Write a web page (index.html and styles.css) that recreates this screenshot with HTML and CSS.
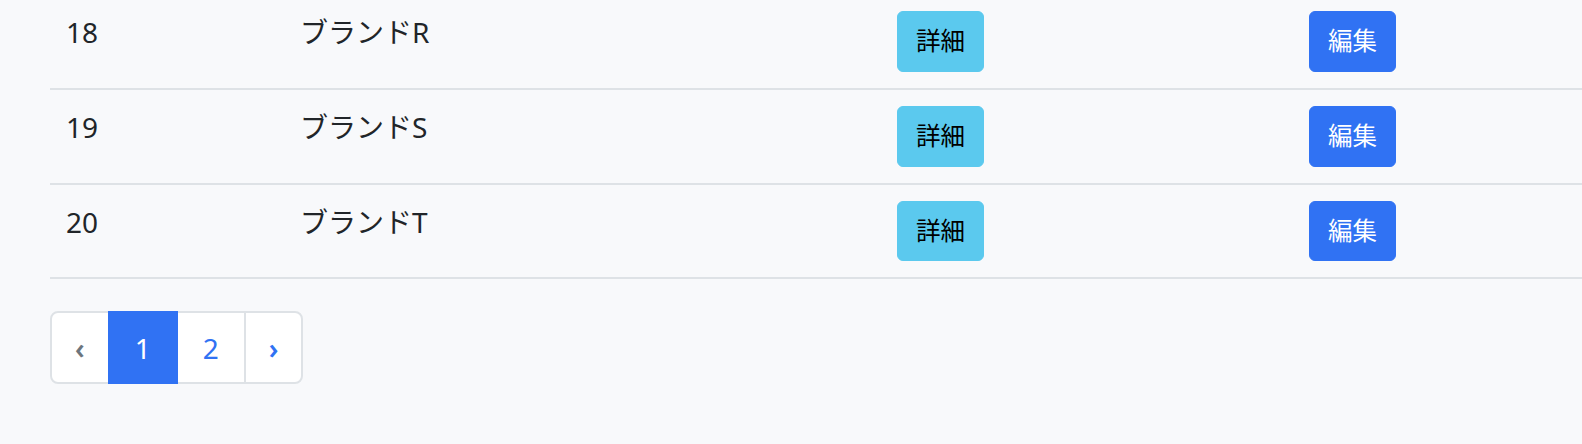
FILE: index.html
```html
<!DOCTYPE html>
<html lang="ja">
<head>
<meta charset="UTF-8" />
<meta name="viewport" content="width=device-width, initial-scale=1" />
<title>ブランド一覧</title>
<link rel="stylesheet" href="styles.css">
</head>
<body>

<div class="main-container">
  <table class="brand-table">
    <colgroup>
      <col class="col-id">
      <col class="col-name">
      <col class="col-detail">
      <col class="col-edit">
    </colgroup>
    <tbody>
      <tr>
        <td>18</td>
        <td>ブランドR</td>
        <td><a class="btn btn-info" href="#">詳細</a></td>
        <td><a class="btn btn-primary" href="#">編集</a></td>
      </tr>
      <tr>
        <td>19</td>
        <td>ブランドS</td>
        <td><a class="btn btn-info" href="#">詳細</a></td>
        <td><a class="btn btn-primary" href="#">編集</a></td>
      </tr>
      <tr>
        <td>20</td>
        <td>ブランドT</td>
        <td><a class="btn btn-info" href="#">詳細</a></td>
        <td><a class="btn btn-primary" href="#">編集</a></td>
      </tr>
    </tbody>
  </table>

  <ul class="pagination">
    <li class="page-item disabled"><span class="page-link arrow">&lsaquo;</span></li>
    <li class="page-item active"><span class="page-link">1</span></li>
    <li class="page-item"><a class="page-link" href="#">2</a></li>
    <li class="page-item"><a class="page-link arrow" href="#">&rsaquo;</a></li>
  </ul>
</div>

</body>
</html>
```

FILE: styles.css
```css
body {
  margin: 0;
  font-family: "Noto Sans", "Noto Sans CJK JP", sans-serif;
  font-size: 28px;
  line-height: 1.5;
  background-color: #f8f9fb;
  color: #212529;
}
.main-container {
  padding-left: 50px;
}
.brand-table {
  width: 100%;
  table-layout: fixed;
  border-collapse: collapse;
  margin-top: -5px;
  margin-bottom: 32px;
}
.col-id { width: 234px; }
.col-name { width: 597px; }
.col-detail { width: 412px; }
.brand-table td {
  vertical-align: top;
  padding: 16px;
  border-bottom: 2px solid #dee2e6;
  white-space: nowrap;
}
.btn {
  display: inline-block;
  font-size: 24.5px;
  line-height: 1.5;
  padding: 11px 18px;
  border: 1px solid transparent;
  border-radius: 6px;
  text-decoration: none;
  vertical-align: top;
}
.btn-info {
  background-color: #5bc9ee;
  border-color: #5bc9ee;
  color: #000;
}
.btn-primary {
  background-color: #3072f3;
  border-color: #3072f3;
  color: #fff;
}
.pagination {
  display: flex;
  list-style: none;
  margin: 0;
  padding: 0;
}
.page-link {
  display: block;
  padding: 13.5px 25px;
  background-color: #fff;
  border: 2px solid #dee2e6;
  color: #3072f3;
  text-decoration: none;
}
.page-link.arrow {
  padding-left: 23px;
  padding-right: 23px;
  font-weight: 600;
}
.page-item + .page-item .page-link {
  margin-left: -2px;
}
.page-item:first-child .page-link {
  border-radius: 8px 0 0 8px;
}
.page-item:last-child .page-link {
  border-radius: 0 8px 8px 0;
}
.page-item.active .page-link {
  position: relative;
  background-color: #3072f3;
  border-color: #3072f3;
  color: #fff;
}
.page-item.disabled .page-link {
  color: #6c757d;
}
```
